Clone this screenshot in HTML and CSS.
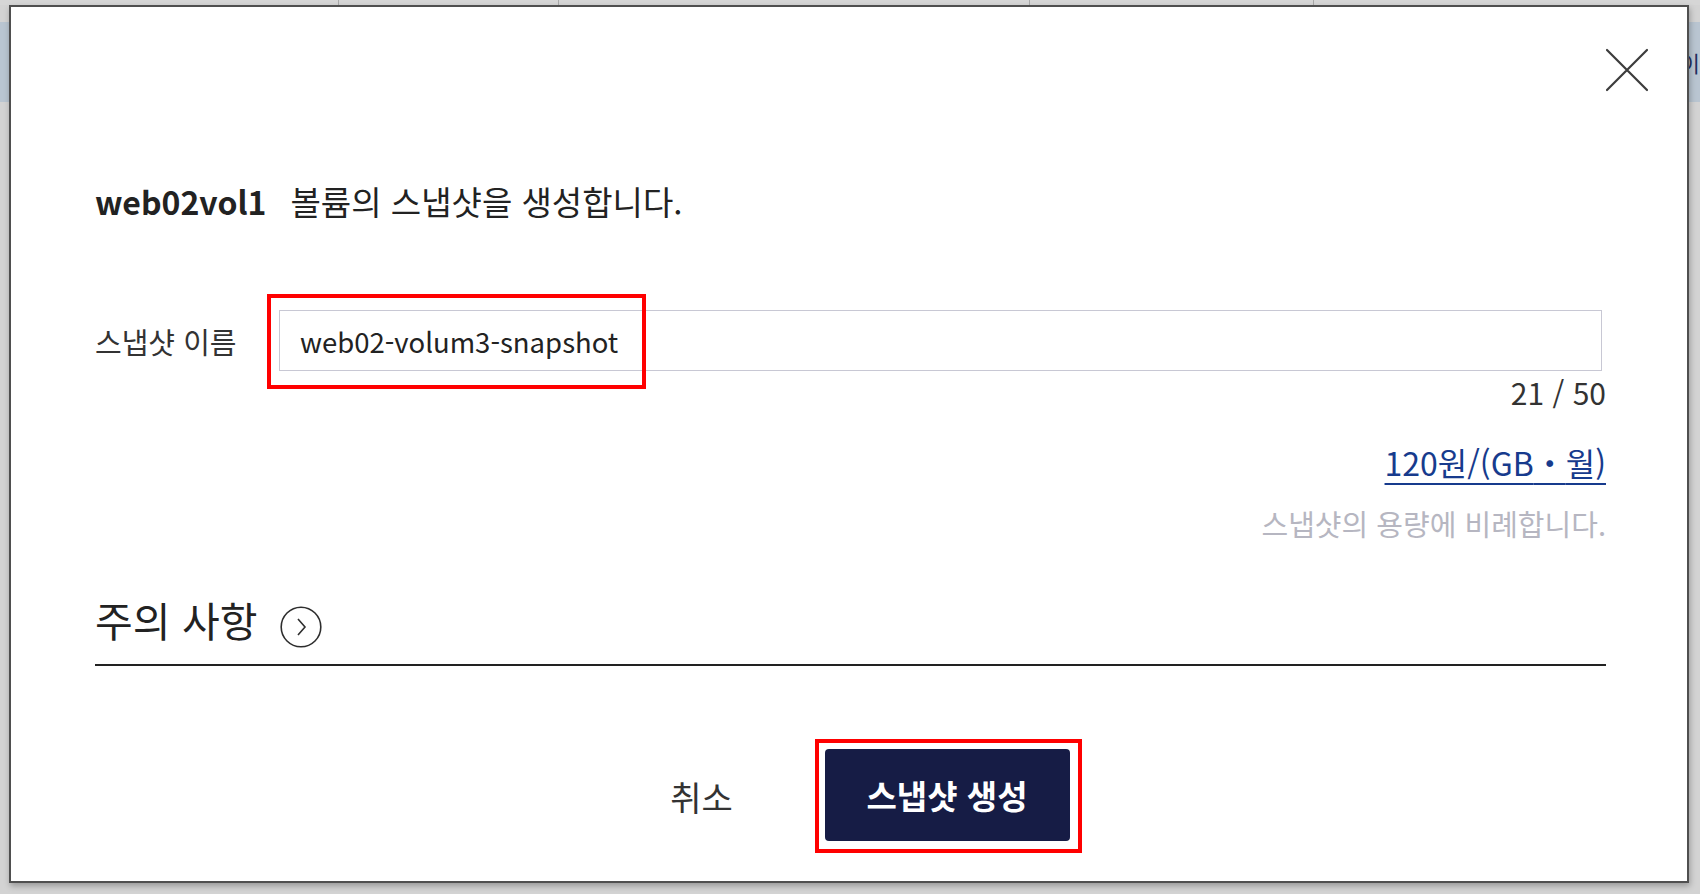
FILE: index.html
```html
<!DOCTYPE html>
<html lang="ko">
<head>
<meta charset="utf-8">
<title>스냅샷 생성</title>
<link rel="stylesheet" href="styles.css">
</head>
<body>
<div class="bg">
  <div class="bg-head">
    <div class="bg-col c1"></div>
    <div class="bg-col c2"></div>
    <div class="bg-col c3"></div>
    <div class="bg-col c4"></div>
    <div class="bg-col c5"></div>
  </div>
  <div class="bg-band"><span class="bg-text">이</span></div>
</div>

<div class="modal">
  <div class="modal-head">
    <button class="close" aria-label="닫기">
      <svg width="44" height="44" viewBox="0 0 44 44"><path d="M2 2 L42 42 M42 2 L2 42" stroke="#3c3c3c" stroke-width="2.2" fill="none" stroke-linecap="round"/></svg>
    </button>
  </div>

  <h2 class="title"><b class="vol">web02vol1</b>볼륨의 스냅샷을 생성합니다.</h2>

  <div class="form-row">
    <label class="label">스냅샷 이름</label>
    <div class="input-wrap">
      <div class="input">web02-volum3-snapshot</div>
      <div class="mark"></div>
    </div>
  </div>
  <div class="counter">21 / 50</div>

  <div class="price"><a class="price-link">120원/(GB<span class="dot">·</span>월)</a></div>
  <div class="note">스냅샷의 용량에 비례합니다.</div>

  <div class="section">
    <span class="section-title">주의 사항</span>
    <span class="circle">
      <svg width="42" height="42" viewBox="0 0 42 42"><circle cx="21" cy="21" r="19.8" stroke="#2e2e2e" stroke-width="1.6" fill="none"/><path d="M18 13 L25 21 L18 29" stroke="#2e2e2e" stroke-width="1.6" fill="none"/></svg>
    </span>
  </div>

  <div class="actions">
    <button class="btn-cancel">취소</button>
    <div class="highlight"><button class="btn-primary">스냅샷 생성</button></div>
  </div>
</div>
</body>
</html>
```

FILE: styles.css
```css
* { box-sizing: border-box; }
html, body { margin: 0; padding: 0; }
body {
  width: 1700px;
  height: 894px;
  overflow: hidden;
  background: #d3d3d3;
  font-family: "Noto Sans CJK KR", "Noto Sans", sans-serif;
  position: relative;
}

.bg-head { display: flex; height: 5px; background: #d6d6d6; }
.bg-col { border-right: 1px solid #a9a9a9; }
.c1 { width: 339px; }
.c2 { width: 220px; }
.c3 { width: 471px; }
.c4 { width: 284px; }
.c5 { flex: 1; border-right: 0; }
.bg-band {
  margin-top: 17px;
  height: 80px;
  background: #b9c5d1;
  display: flex;
  align-items: center;
  justify-content: flex-end;
}
.bg-text { color: #23305f; font-size: 22px; line-height: 1; }

.modal {
  position: absolute;
  left: 9px;
  top: 5px;
  width: 1680px;
  height: 878px;
  background: #fff;
  border: 2px solid #4f4f4f;
  box-shadow: 1px 3px 6px rgba(0, 0, 0, 0.28);
  padding: 0 81px 0 84px;
  display: flex;
  flex-direction: column;
  color: #222;
}

.modal-head {
  display: flex;
  justify-content: flex-end;
  padding-top: 41px;
  margin-right: -43px;
}
.close {
  border: 0;
  background: none;
  padding: 0;
  width: 44px;
  height: 44px;
  display: block;
}
.close svg { display: block; }

.title {
  margin: 87px 0 0;
  font-size: 33px;
  line-height: 44px;
  font-weight: 400;
  color: #222;
}
.vol { font-weight: 700; font-size: 32px; margin-right: 24px; }

.form-row {
  display: flex;
  align-items: center;
  margin-top: 87px;
}
.label {
  width: 184px;
  font-size: 29px;
  color: #333;
}
.input-wrap {
  flex: 1;
  position: relative;
  margin-right: 4px;
}
.input {
  height: 61px;
  border: 1px solid #c8c8d4;
  padding-left: 20px;
  display: flex;
  align-items: center;
  font-size: 27.5px;
  color: #222;
}
.mark {
  position: absolute;
  left: -12px;
  top: -16px;
  width: 379px;
  height: 95px;
  border: 4px solid #f00;
}

.counter {
  margin-top: 3px;
  text-align: right;
  font-size: 30px;
  line-height: 36px;
  color: #333;
}

.price {
  margin-top: 32px;
  text-align: right;
  font-size: 32px;
  line-height: 40px;
}
.price-link {
  color: #173b8d;
  text-decoration: underline;
  text-underline-offset: 7px;
  text-decoration-thickness: 2px;
}
.dot { font-feature-settings: "fwid" 1; }

.note {
  margin-top: 24px;
  text-align: right;
  font-size: 29px;
  line-height: 34px;
  color: #b6b6c1;
}

.section {
  margin-top: 56px;
  display: flex;
  align-items: flex-start;
  padding-bottom: 16px;
  border-bottom: 2px solid #222;
}
.section-title {
  font-size: 41px;
  line-height: 46px;
  color: #222;
}
.circle { margin: 10px 0 0 23px; display: block; }
.circle svg { display: block; }

.actions {
  margin-top: 73px;
  display: flex;
  justify-content: center;
  align-items: center;
  gap: 43px;
  padding-left: 12px;
}
.btn-cancel {
  width: 140px;
  height: 92px;
  border: 0;
  background: none;
  font-family: inherit;
  font-size: 34px;
  color: #333;
  padding: 0;
}
.highlight {
  display: flex;
  padding: 6px 8px 8px 6px;
  border: 4px solid #f00;
}
.btn-primary {
  width: 245px;
  height: 92px;
  border: 0;
  border-radius: 4px;
  background: #161c45;
  color: #fff;
  font-family: inherit;
  font-size: 33px;
  font-weight: 700;
  padding: 0;
}
```
